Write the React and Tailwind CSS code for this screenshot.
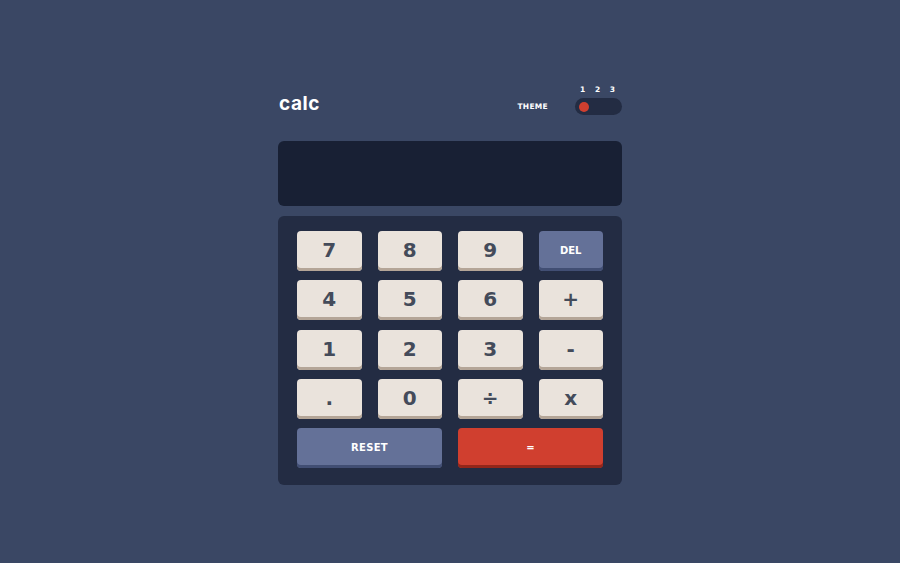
const rows = [
  ["7", "8", "9", "DEL"],
  ["4", "5", "6", "+"],
  ["1", "2", "3", "-"],
  [".", "0", "÷", "x"],
];

function Key({ label }) {
  if (label === "DEL") {
    return (
      <button className="h-[40px] rounded-[4px] bg-[#647198] shadow-[inset_0_-3px_0_#414e73] pb-[2px] text-[10px] font-bold text-white">
        {label}
      </button>
    );
  }
  return (
    <button className="h-[40px] rounded-[4px] bg-[#eae3dc] shadow-[inset_0_-3px_0_#b4a597] pb-[2px] text-[20px] font-bold text-[#444b5a]">
      {label}
    </button>
  );
}

export default function App() {
  return (
    <div
      className="w-full h-[563px] bg-[#3a4764] flex justify-center"
      style={{ fontFamily: '"DejaVu Sans", sans-serif' }}
    >
      <div className="w-[344px] pt-[84px]">
        {/* header */}
        <div className="flex justify-between items-end h-[31px]">
          <span
            className="text-[19px] font-bold text-white leading-none pb-[2px] pl-[1px] tracking-[0.6px]"
            style={{ fontFamily: "Inter, sans-serif" }}
          >
            calc
          </span>
          <div className="flex items-end gap-[27px]">
            <span className="text-[7.5px] font-bold text-white tracking-[0.3px] pb-[3px]">THEME</span>
            <div className="flex flex-col items-center">
              <div className="flex w-[47px] justify-between pl-[5px] pr-[7px] text-[7.5px] font-bold text-white leading-none mb-[5px]">
                <span>1</span>
                <span>2</span>
                <span>3</span>
              </div>
              <div className="w-[47px] h-[17px] rounded-full bg-[#232c43] flex items-center px-[4px]">
                <span className="w-[10px] h-[10px] rounded-full bg-[#d03f2f]" />
              </div>
            </div>
          </div>
        </div>

        {/* screen */}
        <div className="mt-[26px] h-[65px] rounded-[6px] bg-[#182034]" />

        {/* keypad */}
        <div className="mt-[10px] h-[269px] rounded-[6px] bg-[#232c43] px-[19px] pt-[15px]">
          <div className="grid grid-cols-4 gap-x-[16px] gap-y-[9.25px]">
            {rows.flat().map((k) => (
              <Key key={k} label={k} />
            ))}
            <button className="col-span-2 h-[40px] rounded-[4px] bg-[#647198] shadow-[inset_0_-3px_0_#414e73] pb-[2px] text-[10px] font-bold text-white tracking-[0.3px]">
              RESET
            </button>
            <button className="col-span-2 h-[40px] rounded-[4px] bg-[#d03f2f] shadow-[inset_0_-3px_0_#93261a] pb-[2px] text-[10px] font-bold text-white">
              =
            </button>
          </div>
        </div>
      </div>
    </div>
  );
}
